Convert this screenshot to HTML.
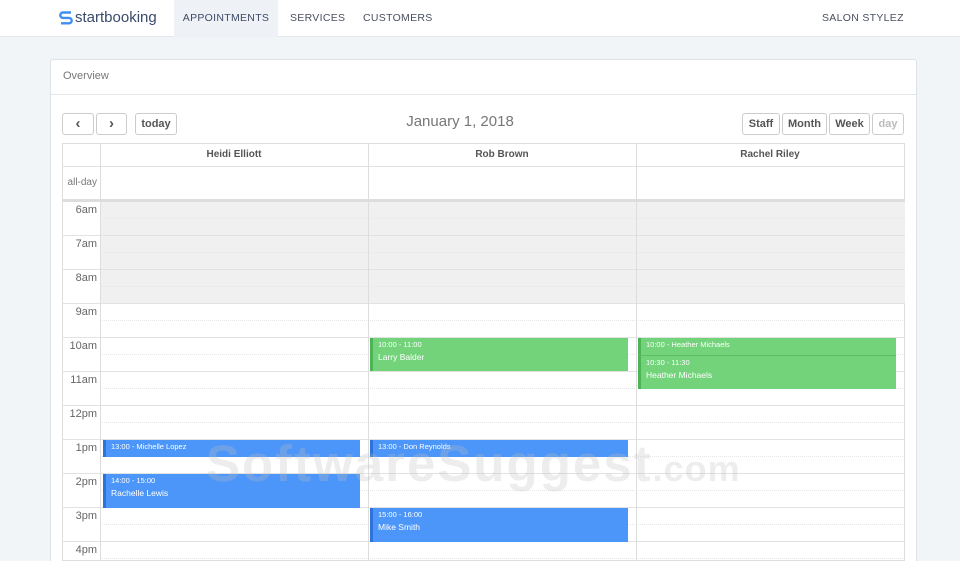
<!DOCTYPE html><html><head><style>
*{box-sizing:border-box;margin:0;padding:0}
html,body{width:960px;height:561px;overflow:hidden}
body{background:#f2f5f8;font-family:"Liberation Sans",sans-serif;position:relative}
.nav{position:absolute;left:0;top:0;width:960px;height:37px;background:#fff;border-bottom:1px solid #e3e7ec}
.nav .it{position:absolute;top:0;height:37px;line-height:36px;font-size:10.5px;color:#4a5060;letter-spacing:.3px}
.panel{position:absolute;left:50px;top:59px;width:867px;height:510px;background:#fff;border:1px solid #dde2e8;border-radius:3px}
.ov{height:35px;border-bottom:1px solid #e3e7ec;font-size:11px;color:#777;line-height:33px;padding-left:12px}
.btn{position:absolute;height:22px;border:1px solid #ccc;border-radius:3px;background:#fff;font-size:11px;color:#555;text-align:center;line-height:20px;font-weight:bold}
.a{position:absolute}
.hl{position:absolute;left:62px;width:843px;height:1px;background:#e2e2e2}
.dl{position:absolute;left:100px;width:805px;height:0;border-top:1px dotted #e6e6e6}
.vl{position:absolute;width:1px;background:#ddd;top:143px;height:418px}
.tl{position:absolute;left:62px;width:35px;text-align:right;font-size:11px;color:#666}
.ev{position:absolute;color:#fff;font-size:7.5px;padding:2px 0 0 5px;border-left:3px solid}
.g{background:#72d37a;border-color:#4cb454}.b{background:#4d96f9;border-color:#2f72dc}
.ev span{display:block;font-size:8.5px;margin-top:3px}
</style></head><body>
<div class="nav">
<svg class="a" style="left:58px;top:10px" width="16" height="16" viewBox="0 0 16 16"><path d="M13 2.5H5a2.7 2.7 0 0 0 0 5.4h6a2.7 2.7 0 0 1 0 5.4H3" fill="none" stroke="#3f8ff0" stroke-width="2.4"/></svg>
<div class="it" style="left:75px;font-size:15px;color:#3a4a6a;letter-spacing:0">startbooking</div>
<div class="it" style="left:174px;width:104px;background:#eef2f6;text-align:center;color:#3f4a66">APPOINTMENTS</div>
<div class="it" style="left:290px">SERVICES</div>
<div class="it" style="left:363px">CUSTOMERS</div>
<div class="it" style="left:822px">SALON STYLEZ</div>
</div>
<div class="panel"><div class="ov">Overview</div></div>
<div class="btn" style="left:62px;top:113px;width:32px;font-size:15px">&lsaquo;</div>
<div class="btn" style="left:96px;top:113px;width:31px;font-size:15px">&rsaquo;</div>
<div class="btn" style="left:135px;top:113px;width:42px">today</div>
<div class="a" style="left:360px;top:113px;width:200px;text-align:center;font-size:15px;color:#777">January 1, 2018</div>
<div class="btn" style="left:742px;top:113px;width:38px">Staff</div>
<div class="btn" style="left:782px;top:113px;width:45px">Month</div>
<div class="btn" style="left:829px;top:113px;width:41px">Week</div>
<div class="btn" style="left:872px;top:113px;width:32px;color:#bbb">day</div>
<div class="a" style="left:62px;top:143px;width:843px;height:418px;border:1px solid #ddd"></div>
<div class="a" style="left:100px;top:201px;width:805px;height:102px;background:#f0f0f0"></div>
<div class="hl" style="top:166px"></div>
<div class="a" style="left:62px;top:199px;width:843px;height:3px;background:#ddd"></div>
<div class="hl" style="top:235px"></div><div class="hl" style="top:269px"></div><div class="hl" style="top:303px"></div><div class="hl" style="top:337px"></div><div class="hl" style="top:371px"></div><div class="hl" style="top:405px"></div><div class="hl" style="top:439px"></div><div class="hl" style="top:473px"></div><div class="hl" style="top:507px"></div><div class="hl" style="top:541px"></div>
<div class="dl" style="top:218px"></div><div class="dl" style="top:252px"></div><div class="dl" style="top:286px"></div><div class="dl" style="top:320px"></div><div class="dl" style="top:354px"></div><div class="dl" style="top:388px"></div><div class="dl" style="top:422px"></div><div class="dl" style="top:456px"></div><div class="dl" style="top:490px"></div><div class="dl" style="top:524px"></div><div class="dl" style="top:558px"></div>
<div class="vl" style="left:100px"></div><div class="vl" style="left:368px"></div><div class="vl" style="left:636px"></div>
<div class="a" style="left:100px;top:149px;width:268px;text-align:center;font-size:10px;font-weight:bold;color:#555">Heidi Elliott</div>
<div class="a" style="left:368px;top:149px;width:268px;text-align:center;font-size:10px;font-weight:bold;color:#555">Rob Brown</div>
<div class="a" style="left:636px;top:149px;width:268px;text-align:center;font-size:10px;font-weight:bold;color:#555">Rachel Riley</div>
<div class="tl" style="top:177px;font-size:10px;color:#777">all-day</div>
<div class="tl" style="top:204px">6am</div><div class="tl" style="top:238px">7am</div><div class="tl" style="top:272px">8am</div><div class="tl" style="top:306px">9am</div><div class="tl" style="top:340px">10am</div><div class="tl" style="top:374px">11am</div><div class="tl" style="top:408px">12pm</div><div class="tl" style="top:442px">1pm</div><div class="tl" style="top:476px">2pm</div><div class="tl" style="top:510px">3pm</div><div class="tl" style="top:544px">4pm</div>
<div class="ev g" style="left:370px;top:338px;width:258px;height:33px">10:00 - 11:00<span>Larry Balder</span></div>
<div class="ev g" style="left:638px;top:338px;width:258px;height:17px">10:00 - Heather Michaels</div>
<div class="ev g" style="left:638px;top:355px;width:258px;height:34px;border-top:1px solid #5cbf64">10:30 - 11:30<span>Heather Michaels</span></div>
<div class="ev b" style="left:103px;top:440px;width:257px;height:17px">13:00 - Michelle Lopez</div>
<div class="ev b" style="left:103px;top:474px;width:257px;height:34px">14:00 - 15:00<span>Rachelle Lewis</span></div>
<div class="ev b" style="left:370px;top:440px;width:258px;height:17px">13:00 - Don Reynolds</div>
<div class="ev b" style="left:370px;top:508px;width:258px;height:34px">15:00 - 16:00<span>Mike Smith</span></div>
<div class="a" style="left:206px;top:434px;font-size:51px;font-weight:bold;color:rgba(190,190,190,.28);letter-spacing:2px;white-space:nowrap">SoftwareSuggest<span style="font-size:36px;letter-spacing:1px">.com</span></div>
</body></html>
